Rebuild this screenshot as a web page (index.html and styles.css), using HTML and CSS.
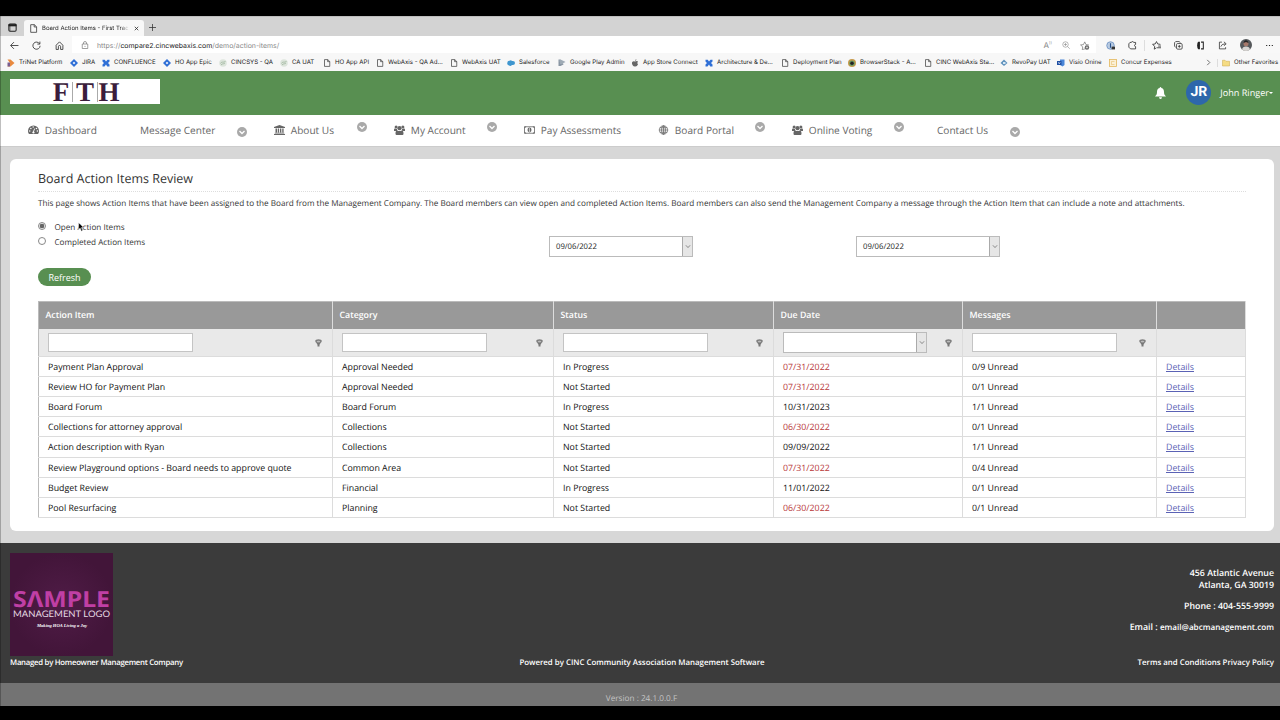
FILE: index.html
```html
<!DOCTYPE html>
<html lang="en">
<head>
    <meta charset="UTF-8">
    <meta name="viewport" content="width=device-width, initial-scale=1.0">
    <title>Board Action Items - First Trace Homes</title>
    <link rel="stylesheet" href="styles.css">
</head>
<body>
    <!-- Shared icon shapes -->
    <svg class="sprite" xmlns="http://www.w3.org/2000/svg">
        <symbol id="i-page" viewBox="0 0 16 16"><path d="M3 1.2h6.5L13.5 5v9.8H3zM9.2 1.2V5.3h4.3" fill="none" stroke="#444" stroke-width="1.5" stroke-linejoin="round"/></symbol>
        <symbol id="i-jira" viewBox="0 0 16 16"><path d="M8 0l8 8-8 8-8-8z" fill="#2f6fd6"/><path d="M8 5.4L10.6 8 8 10.6 5.4 8z" fill="#fff"/></symbol>
        <symbol id="i-conf" viewBox="0 0 16 16"><path d="M1 1.5h4.5L8 5l3-3.5h4L15 5l-3 3 3 3v4h-4.5L8 11l-3 3.8H1V11l3-3-3-3z" fill="#2f6fd6"/></symbol>
        <symbol id="i-leaf" viewBox="0 0 16 16"><circle cx="8" cy="8" r="7.5" fill="#dde5dc"/><path d="M3 9c2-5 5-1 10-4M4 12c3-4 6-1 8-4" fill="none" stroke="#9db49c" stroke-width="1.6"/></symbol>
        <symbol id="i-chev" viewBox="0 0 20 20"><circle cx="10" cy="10" r="10" fill="#a9a9a9"/><path d="M5 8l5 5 5-5" fill="none" stroke="#fff" stroke-width="2.6"/></symbol>
        <symbol id="i-users" viewBox="0 0 22 20"><circle cx="4.2" cy="4" r="3"/><circle cx="17.8" cy="4" r="3"/><circle cx="11" cy="6.3" r="4.2"/><path d="M0 12V9.5Q0 7 2 7.2q3 1.3 4 .6-.3 2.5 1 4.2zM22 12V9.5Q22 7 20 7.2q-3 1.3-4 .6.3 2.5-1 4.2zM3 17c0-4 1-6 4-6q4 2.2 8 0c3 0 4 2 4 6 0 2-1 3-3 3H6c-2 0-3-1-3-3z"/></symbol>
        <symbol id="i-filter" viewBox="0 0 14 16"><ellipse cx="7" cy="4" rx="6.5" ry="3.5" fill="#7d7d7d"/><ellipse cx="7" cy="4.4" rx="3.6" ry="1.1" fill="#d0d0d0"/><path d="M.8 5.5L5 11h4l4.2-5.5L7 8z" fill="#777"/><path d="M5 10h4v5H5z" fill="#777"/></symbol>
        <symbol id="i-down" viewBox="0 0 10 8"><path d="M1.5 2L5 5.8 8.5 2" fill="none" stroke="#777" stroke-width="1.4"/></symbol>
    </svg>

    <!-- Browser window -->
    <div class="tabs">
        <svg class="tab-menu" viewBox="0 0 16 16"><rect x="1.5" y="2" width="13" height="12.5" rx="2" fill="none" stroke="#222" stroke-width="1.8"/><path d="M1.5 2.5h13v3h-13zM3.5 5v9" stroke="#222" fill="#222"/></svg>
        <div class="tab">
            <svg class="tab-icon"><use href="#i-page"/></svg>
            <span class="tab-title">Board Action Items - First Trac</span>
            <svg class="tab-close" viewBox="0 0 10 10"><path d="M1.5 1.5l7 7M8.5 1.5l-7 7" stroke="#222" stroke-width="1.5"/></svg>
        </div>
        <svg class="tab-new" viewBox="0 0 10 10"><path d="M5 0v10M0 5h10" stroke="#333" stroke-width="1.1"/></svg>
    </div>

    <div class="toolbar">
        <div class="tools-left">
            <svg viewBox="0 0 16 16"><path d="M15 8H1.5M7 2L1 8l6 6" fill="none" stroke="#333" stroke-width="1.5"/></svg>
            <svg viewBox="0 0 16 16"><path d="M13.5 5A6.4 6.4 0 1 0 14.4 8.5M14 1v4.5H9.5" fill="none" stroke="#333" stroke-width="1.5"/></svg>
            <svg viewBox="0 0 16 16"><path d="M2 7.5L8 1.5l6 6V15h-4V10a2 2 0 0 0-4 0v5H2z" fill="none" stroke="#333" stroke-width="1.5"/></svg>
        </div>
        <div class="address">
            <svg viewBox="0 0 16 16"><path d="M2.5 6h11v9h-11zM5 6V4a3 3 0 0 1 6 0v2" fill="none" stroke="#777" stroke-width="1.4"/><circle cx="8" cy="10.5" r="1" fill="#777"/></svg>
            <span class="url">https://<b>compare2.cincwebaxis.com</b>/demo/action-items/</span>
            <span class="read-aloud">A<sup>))</sup></span>
            <svg class="zoom-in" viewBox="0 0 16 16"><circle cx="7" cy="7" r="5.5" fill="none" stroke="#888" stroke-width="1.2"/><path d="M11 11l4.5 4.5M4 7h6M7 4v6" stroke="#888" stroke-width="1.2"/></svg>
            <svg class="star-add" viewBox="0 0 18 16"><path d="M9 14l-5 1.5 1-5L1 7l5.2-.6L8.5 1.5l2.3 4.9L16 7" fill="none" stroke="#777" stroke-width="1.3"/><circle cx="12.5" cy="11.5" r="4" fill="#666"/><path d="M12.5 9.5v4M10.5 11.5h4" stroke="#fff"/></svg>
        </div>
        <div class="tools-right">
            <svg viewBox="0 0 16 16"><circle cx="8" cy="8" r="6.7" fill="#b9cbe2" stroke="#6e93c2" stroke-width="1.5"/><path d="M8 4v8" stroke="#28538f" stroke-width="2"/><path d="M10 10h6v5h-6z" fill="#333"/></svg>
            <svg viewBox="0 0 16 16"><path d="M6 2.5c0-2 4-2 4 0h3.5V6c-2.5 0-2.5 4 0 4v4H4.5L1.5 11V5l2-2.5z" fill="none" stroke="#333" stroke-width="1.5"/></svg>
            <i></i>
            <svg viewBox="0 0 16 16"><path d="M4 14.5l.8-5L1 6l4.7-.8L8 1l2 4.2 5 .8M11 9h5M9 12h7M4 14.5l4-2.5" fill="none" stroke="#333" stroke-width="1.5"/></svg>
            <svg viewBox="0 0 16 16"><rect x="4.5" y="4.5" width="10" height="10" rx="2" fill="none" stroke="#333" stroke-width="1.4"/><path d="M3 11.5L1 9V3l2-2h6l2.5 2M9.5 7v5M7 9.5h5" fill="none" stroke="#333" stroke-width="1.4"/></svg>
            <svg viewBox="0 0 16 16"><path d="M7 1.5H4Q2 3 2 8t2 6.5h3z" fill="#222"/><path d="M9 2h4v12H9" fill="none" stroke="#222" stroke-width="1.8"/></svg>
            <svg viewBox="0 0 16 16"><path d="M7 2H2.5v12h11v-3M5 10q1-5 8-5M10.5 1.5L14.5 5l-4 3.5" fill="none" stroke="#333" stroke-width="1.4"/></svg>
            <svg class="avatar" viewBox="0 0 24 24"><circle cx="12" cy="12" r="12" fill="#55585b"/><circle cx="12" cy="9.5" r="5" fill="#a6786a"/><path d="M7 8q1-6 5-5.5T17 8l-5-2z" fill="#222"/><path d="M4 21q1-6 8-6t8 6q-8 6-16 0z" fill="#d8d5d2"/></svg>
            <svg viewBox="0 0 16 16"><path d="M2 8h2M7 8h2M12 8h2" stroke="#222" stroke-width="2"/></svg>
        </div>
    </div>

    <div class="bookmarks">
        <div class="bookmark-list">
            <a><svg viewBox="0 0 16 16"><path d="M1 1h6l8 7-8 7H1l5-7z" fill="#e8893f"/><path d="M1 7h5v8H1z" fill="#7a5e8e"/></svg>TriNet Platform</a>
            <a><svg><use href="#i-jira"/></svg>JIRA</a>
            <a><svg><use href="#i-conf"/></svg>CONFLUENCE</a>
            <a><svg><use href="#i-jira"/></svg>HO App Epic</a>
            <a><svg><use href="#i-leaf"/></svg>CINCSYS - QA</a>
            <a><svg><use href="#i-leaf"/></svg>CA UAT</a>
            <a><svg><use href="#i-page"/></svg>HO App API</a>
            <a><svg><use href="#i-page"/></svg>WebAxis - QA Ad...</a>
            <a><svg><use href="#i-page"/></svg>WebAxis UAT</a>
            <a><svg viewBox="0 0 16 16"><path d="M4 13Q0 12 .5 8 1 3 5 3.5 8 1 10 4q6-1 6 4t-6 4q-3 3-6 1z" fill="#3f96cf"/></svg>Salesforce</a>
            <a><svg viewBox="0 0 16 16"><path d="M1 1h4l10 5-5 2 1 3-6 3H1z" fill="#8996a3"/><path d="M3 4h10M4 8h7" stroke="#dfe5ea"/></svg>Google Play Admin</a>
            <a><svg viewBox="0 0 16 16"><path d="M8 5q4-2 6 0-3 3 0 6-3 5-6 3.5Q5 16 3 12 0 6 5 4.5zM8 4q0-3 3-3.5Q11 3 8 4z" fill="#666"/></svg>App Store Connect</a>
            <a><svg><use href="#i-conf"/></svg>Architecture &amp; De...</a>
            <a><svg><use href="#i-page"/></svg>Deployment Plan</a>
            <a><svg viewBox="0 0 16 16"><circle cx="8" cy="8" r="8" fill="#c79a4b"/><circle cx="8" cy="8.5" r="5.5" fill="#6d9d63"/><circle cx="8" cy="8.5" r="3.5" fill="#222"/></svg>BrowserStack - A...</a>
            <a><svg><use href="#i-page"/></svg>CINC WebAxis Sta...</a>
            <a><svg viewBox="0 0 16 16"><path d="M8 1l7 7-7 6-7-6z" fill="#5f92bd"/><path d="M6 6h5v4H6z" fill="#d6e6f2"/></svg>RevoPay UAT</a>
            <a><svg viewBox="0 0 16 16"><path d="M6 1h9v11l-4 3-5-3z" fill="#4a86d8"/><path d="M0 4h9v8H0z" fill="#1f4fa3"/><path d="M2.5 6l2 4 2-4" stroke="#fff" fill="none"/></svg>Visio Onine</a>
            <a><svg viewBox="0 0 16 16"><rect x="1" y="1" width="14" height="14" fill="#fbf0d5" stroke="#e3b75d" stroke-width="1.6"/><path d="M11 5H5v6h6" fill="none" stroke="#e3b75d"/></svg>Concur Expenses</a>
        </div>
        <svg class="more" viewBox="0 0 10 16"><path d="M2 2l6 6-6 6" fill="none" stroke="#444" stroke-width="1.7"/></svg>
        <a class="other"><svg viewBox="0 0 16 16"><path d="M1 2.5h5l2 2h7V14H1z" fill="#f5dc83" stroke="#c9a748"/></svg>Other Favorites</a>
    </div>

    <!-- Site header -->
    <header class="header">
        <div class="logo">
            <span>F</span><span>T</span><span>H</span>
        </div>
        <div class="account">
            <svg class="bell" viewBox="0 0 22 24"><path d="M11 0q1.5 0 1.7 2C17 3 18 6.5 18 10c0 5 1.5 6 4 9H0c2.5-3 4-4 4-9 0-3.5 1-7 5.3-8Q9.5 0 11 0zM8 20.5h6Q14 24 11 24t-3-3.5z" fill="#fff"/></svg>
            <span class="initials">JR</span>
            <span class="user">John Ringer<i></i></span>
        </div>
    </header>

    <nav class="nav">
        <a><svg class="nav-icon" viewBox="0 0 22 20"><path d="M0 12a11 11 0 0 1 22 0q0 4-2 6H2q-2-2-2-6z"/><path d="M10 15l3.5-8" stroke="#fff" stroke-width="1.8"/><g fill="#fff"><circle cx="11" cy="15" r="2.2"/><circle cx="3.5" cy="12" r="1.5"/><circle cx="5.7" cy="6.8" r="1.5"/><circle cx="10.3" cy="4" r="1.4"/><circle cx="17" cy="7" r="1.5"/><circle cx="18.7" cy="12" r="1.5"/></g></svg>Dashboard</a>
        <a>Message Center<svg class="chev low"><use href="#i-chev"/></svg></a>
        <a><svg class="nav-icon" viewBox="0 0 22 20"><path d="M11 0l11 4v2H0V4zM3 7h3v8H3zM7.5 7h2.7v8H7.5zM12 7h2.7v8H12zM16.5 7h2.7v8h-2.7zM1.5 15.5h19V17h-19zM0 18h22v2H0z"/></svg>About Us<svg class="chev"><use href="#i-chev"/></svg></a>
        <a><svg class="nav-icon"><use href="#i-users"/></svg>My Account<svg class="chev"><use href="#i-chev"/></svg></a>
        <a><svg class="nav-icon" viewBox="0 0 22 20"><path d="M1 3.5h20v13H1z" fill="none" stroke="#666" stroke-width="1.6"/><path d="M1 3h4L1 7zM21 3v4l-4-4zM1 17v-4l4 4zM21 17h-4l4-4z"/><ellipse cx="11" cy="10" rx="4" ry="4.8"/><path d="M9.5 8l1.5-1v5.5M9.5 12.8h3" fill="none" stroke="#fff" stroke-width="1.2"/></svg>Pay Assessments</a>
        <a><svg class="nav-icon" viewBox="0 0 22 20"><g fill="none" stroke="#666" stroke-width="1.5"><circle cx="11" cy="10" r="8.5"/><ellipse cx="11" cy="10" rx="4" ry="8.5"/><path d="M11 1.5v17M2.5 10h17M4 5.5h14M4 14.5h14"/></g></svg>Board Portal<svg class="chev"><use href="#i-chev"/></svg></a>
        <a><svg class="nav-icon"><use href="#i-users"/></svg>Online Voting<svg class="chev"><use href="#i-chev"/></svg></a>
        <a>Contact Us<svg class="chev low"><use href="#i-chev"/></svg></a>
    </nav>

    <!-- Page content -->
    <main class="content">
        <section class="card">
            <h1>Board Action Items Review</h1>
            <p class="intro">This page shows Action Items that have been assigned to the Board from the Management Company. The Board members can view open and completed Action Items. Board members can also send the Management Company a message through the Action Item that can include a note and attachments.</p>

            <div class="options">
                <div class="radios">
                    <label><span class="radio checked"></span>Open Action Items
                        <svg class="cursor" viewBox="0 0 10 16"><path d="M1 1v11l2.6-2.3L5.5 15l2.2-1-2-5h3.8z" fill="#000" stroke="#fff" stroke-width=".8"/></svg>
                    </label>
                    <label><span class="radio"></span>Completed Action Items</label>
                </div>
                <div class="date"><span>09/06/2022</span><i><svg><use href="#i-down"/></svg></i></div>
                <div class="date"><span>09/06/2022</span><i><svg><use href="#i-down"/></svg></i></div>
            </div>

            <button class="btn">Refresh</button>

            <table class="grid">
                <colgroup><col class="c1"><col class="c2"><col class="c3"><col class="c4"><col class="c5"><col class="c6"></colgroup>
                <thead>
                    <tr><th>Action Item</th><th>Category</th><th>Status</th><th>Due Date</th><th>Messages</th><th></th></tr>
                    <tr class="filters">
                        <td><div><span class="box"></span><svg><use href="#i-filter"/></svg></div></td>
                        <td><div><span class="box"></span><svg><use href="#i-filter"/></svg></div></td>
                        <td><div><span class="box"></span><svg><use href="#i-filter"/></svg></div></td>
                        <td><div><span class="date"><span></span><i><svg><use href="#i-down"/></svg></i></span><svg><use href="#i-filter"/></svg></div></td>
                        <td><div><span class="box"></span><svg><use href="#i-filter"/></svg></div></td>
                        <td></td>
                    </tr>
                </thead>
                <tbody>
                    <tr><td>Payment Plan Approval</td><td>Approval Needed</td><td>In Progress</td><td class="late">07/31/2022</td><td>0/9 Unread</td><td><a>Details</a></td></tr>
                    <tr><td>Review HO for Payment Plan</td><td>Approval Needed</td><td>Not Started</td><td class="late">07/31/2022</td><td>0/1 Unread</td><td><a>Details</a></td></tr>
                    <tr><td>Board Forum</td><td>Board Forum</td><td>In Progress</td><td>10/31/2023</td><td>1/1 Unread</td><td><a>Details</a></td></tr>
                    <tr><td>Collections for attorney approval</td><td>Collections</td><td>Not Started</td><td class="late">06/30/2022</td><td>0/1 Unread</td><td><a>Details</a></td></tr>
                    <tr class="tall"><td>Action description with Ryan</td><td>Collections</td><td>Not Started</td><td>09/09/2022</td><td>1/1 Unread</td><td><a>Details</a></td></tr>
                    <tr><td>Review Playground options - Board needs to approve quote</td><td>Common Area</td><td>Not Started</td><td class="late">07/31/2022</td><td>0/4 Unread</td><td><a>Details</a></td></tr>
                    <tr><td>Budget Review</td><td>Financial</td><td>In Progress</td><td>11/01/2022</td><td>0/1 Unread</td><td><a>Details</a></td></tr>
                    <tr><td>Pool Resurfacing</td><td>Planning</td><td>Not Started</td><td class="late">06/30/2022</td><td>0/1 Unread</td><td><a>Details</a></td></tr>
                </tbody>
            </table>
        </section>
    </main>

    <footer class="footer">
        <div class="footer-top">
            <svg class="sample-logo" viewBox="0 0 103 103">
                <defs><radialGradient id="plum"><stop offset="0" stop-color="#501c47"/><stop offset="1" stop-color="#421539"/></radialGradient></defs>
                <rect width="103" height="103" fill="url(#plum)"/>
                <text class="l1" x="3" y="54" textLength="97" lengthAdjust="spacingAndGlyphs">SΛMPLE</text>
                <text class="l2" x="3" y="63.8" textLength="97" lengthAdjust="spacingAndGlyphs">MANAGEMENT LOGO</text>
                <text class="l3" x="27" y="74" textLength="50" lengthAdjust="spacingAndGlyphs">Making HOA Living a Joy</text>
            </svg>
            <address>
                <p>456 Atlantic Avenue<br>Atlanta, GA 30019</p>
                <p>Phone : 404-555-9999</p>
                <p>Email : <span>email@abcmanagement.com</span></p>
            </address>
        </div>
        <div class="footer-links">
            <span class="managed">Managed by Homeowner Management Company</span>
            <span>Powered by CINC Community Association Management Software</span>
            <span>Terms and Conditions Privacy Policy</span>
        </div>
    </footer>
    <div class="version">Version : 24.1.0.0.F</div>
</body>
</html>
```
FILE: styles.css
```css
:root {
    --green: #588f51;
    --gray: #999;
    --line: #dcdcdc;
    --text: #333;
}

* {
    margin: 0;
    padding: 0;
    box-sizing: border-box;
}

body {
    position: relative;
    width: 1280px;
    height: 720px;
    overflow: hidden;
    padding: 16px 0 14px;
    background: #000;
    font-family: 'Open Sans', 'Liberation Sans', sans-serif;
    font-size: 9px;
    color: var(--text);
    text-rendering: geometricPrecision;
    display: flex;
    flex-direction: column;
}

/* window edge */
body::after {
    content: '';
    position: absolute;
    left: 0;
    top: 16px;
    bottom: 14px;
    width: 1px;
    background: rgba(0, 0, 0, 0.25);
}

svg {
    display: block;
    flex: none;
}

.sprite {
    position: absolute;
    width: 0;
    height: 0;
}

/* browser chrome */
.tabs,
.toolbar,
.bookmarks {
    font-family: Inter, 'Liberation Sans', sans-serif;
    display: flex;
    align-items: center;
}

.tabs {
    height: 20px;
    padding: 1px 0 0 8px;
    background: #d3d3d3;
    border-top: 1px solid #bdbdbd;
}

.tab-menu {
    width: 9px;
    height: 9px;
}

.tab {
    display: flex;
    align-items: center;
    width: 120px;
    height: 16px;
    margin: 2px 0 0 7px;
    padding: 0 6px 0 5px;
    background: #f8f8f8;
    border-radius: 3px 3px 0 0;
}

.tab-icon {
    width: 9px;
    height: 9px;
}

.tab-title {
    width: 87px;
    margin: 0 5px 0 4px;
    font-size: 6px;
    color: #222;
    white-space: nowrap;
    -webkit-mask-image: linear-gradient(90deg, #000 90%, transparent);
}

.tab-close {
    width: 5px;
    height: 5px;
}

.tab-new {
    width: 7px;
    height: 7px;
    margin-left: 5px;
}

.toolbar {
    height: 17px;
    background: #f8f8f8;
}

.tools-left {
    display: flex;
    gap: 13.5px;
    padding: 1px 0 0 9.5px;
    width: 72px;
}

.tools-left svg,
.tools-right svg {
    width: 9px;
    height: 9px;
}

.address {
    display: flex;
    align-items: center;
    width: 1024px;
    height: 17px;
    padding: 1px 6px 0 9px;
    background: #fff;
    color: #888;
}

.address svg {
    width: 8px;
    height: 8px;
}

.url {
    margin: 0 auto 0 8px;
    font-size: 6.95px;
}

.url b {
    font-weight: 400;
    color: #222;
}

.read-aloud {
    font-size: 8px;
}

.read-aloud sup {
    font-size: 4px;
}

.address .zoom-in {
    margin: 0 10px;
}

.address .star-add {
    width: 10px;
    height: 9px;
}

.tools-right {
    display: flex;
    align-items: center;
    flex: 1;
    justify-content: space-between;
    padding: 1px 6px 0 10px;
}

.tools-right i {
    width: 1px;
    height: 11px;
    margin: 0 -6px;
    background: #ddd;
}

.tools-right .avatar {
    width: 12px;
    height: 12px;
}

.bookmarks {
    height: 18px;
    padding: 1px 0 0 7px;
    background: #f7f7f7;
    font-size: 6.1px;
    color: #222;
}

.bookmark-list {
    display: grid;
    grid-template-columns: 63px 32px 61px 56px 61px 43px 53px 74px 57px 51px 73px 74px 76px 67px 76px 76px 57px 52px 94px;
}

.bookmarks a {
    display: flex;
    align-items: center;
    gap: 4px;
    white-space: nowrap;
}

.bookmarks a svg {
    width: 8px;
    height: 8px;
}

.bookmarks .more {
    width: 5px;
    height: 7px;
    margin-left: 3px;
}

.bookmarks .other {
    margin-left: 6px;
    padding-left: 4px;
    border-left: 1px solid #ddd;
}

/* green header */
.header {
    display: flex;
    justify-content: space-between;
    height: 43.5px;
    padding: 8px 7px 0 10px;
    background: var(--green);
}

.logo {
    display: flex;
    justify-content: center;
    align-items: center;
    width: 150px;
    height: 25px;
    background: #fff;
    font: 700 27px/20px 'Liberation Serif', serif;
    color: #3b1d3c;
}

.logo span {
    display: flex;
    justify-content: center;
    width: 22px;
    height: 20px;
}

.logo span:nth-child(2) {
    width: 26px;
    border: 1px solid #aaa;
    border-width: 0 1px;
}

.account {
    display: flex;
    align-items: center;
    height: 27px;
    color: #fff;
}

.bell {
    width: 11px;
    height: 12px;
}

.initials {
    width: 25px;
    height: 25px;
    margin: 0 9px 0 20px;
    border-radius: 50%;
    background: #2d67ab;
    font: 700 14px/25px Roboto, sans-serif;
    text-align: center;
}

.user {
    display: flex;
    align-items: center;
    font-size: 9.1px;
}

.user i {
    border: 2.5px solid transparent;
    border-top-color: #fff;
    border-bottom: 0;
}

/* main menu */
.nav {
    display: grid;
    grid-template-columns: 112px 134px 120px 130px 134px 134px 139px 116px;
    height: 32px;
    padding-left: 28px;
    background: #fff;
    border-bottom: 1px solid #ccc;
}

.nav a {
    display: flex;
    align-items: center;
    padding: 0 27px 0 0;
    font-size: 10.1px;
    color: #666;
    white-space: nowrap;
}

.nav a:last-child {
    padding-left: 6px;
}

.nav-icon {
    width: 11px;
    height: 10px;
    margin-right: 5.8px;
    fill: #666;
}

.chev {
    width: 10px;
    height: 10px;
    margin: 0 0 6px auto;
}

.chev.low {
    margin: 3px 0 0 auto;
}

/* content card */
.content {
    height: 396.5px;
    padding: 12.5px 6px 12px 10px;
    background: #d7d7d7;
}

.card {
    height: 372px;
    padding: 11px 28px 0;
    background: #fff;
    border-radius: 6px;
}

h1 {
    height: 22px;
    font-size: 12.5px;
    line-height: 18px;
    font-weight: 400;
    border-bottom: 1px dotted #ddd;
}

.intro {
    margin-top: 4px;
    font-size: 8.165px;
    line-height: 15px;
    white-space: nowrap;
}

.options {
    display: flex;
    margin-top: 8px;
    height: 40px;
}

.radios {
    width: 511px;
}

.radios label {
    position: relative;
    display: flex;
    align-items: center;
    height: 15px;
    padding-top: 1px;
    font-size: 8.15px;
}

.radio {
    width: 8px;
    height: 8px;
    margin: 0 8.5px 2px 0;
    border: 1px solid #888;
    border-radius: 50%;
}

.radio.checked {
    background: radial-gradient(#666 0 2px, #eee 2.6px);
}

.cursor {
    position: absolute;
    left: 40px;
    top: 3px;
    width: 6px;
    height: 10px;
}

.date {
    display: flex;
    justify-content: space-between;
    width: 144px;
    height: 21px;
    border: 1px solid #bbb;
    background: #fff;
    font-size: 7.7px;
    line-height: 20px;
    color: #222;
}

.options .date {
    margin: 17px 163px 0 0;
}

.options .date span {
    padding-left: 6px;
}

.date i {
    display: flex;
    align-items: center;
    justify-content: center;
    width: 10px;
    background: #e6e6e6;
    border-left: 1px solid #aaa;
}

.date i svg {
    width: 6px;
    height: 5px;
}

.btn {
    display: block;
    width: 53px;
    height: 18px;
    margin-top: 9px;
    border: none;
    border-radius: 9px;
    background: var(--green);
    color: #fff;
    font: 9px/17px 'Open Sans', sans-serif;
}

/* action items table */
.grid {
    width: 1208px;
    margin-top: 15px;
    table-layout: fixed;
    border-collapse: collapse;
    border: 1px solid #bbb;
    color: #111;
    font-size: 8.8px;
}

.c1 { width: 294px; }
.c2 { width: 221px; }
.c3 { width: 220px; }
.c4 { width: 189px; }
.c5 { width: 194px; }
.c6 { width: 89px; }

.grid th {
    height: 27px;
    padding: 0 0 0 6.5px;
    text-align: left;
    font-weight: 600;
    color: #fff;
    background: var(--gray);
    border-right: 1px solid #ddd;
}

.grid td {
    height: 20px;
    padding-left: 9px;
    line-height: 12px;
    border-right: 1px solid var(--line);
    border-bottom: 1px solid var(--line);
}

.grid .tall td {
    height: 21px;
}

.grid .filters td {
    height: 28px;
    background: #e9e9e9;
}

.filters div {
    display: flex;
    justify-content: space-between;
    align-items: center;
    padding-right: 10px;
}

.filters div > svg {
    width: 7px;
    height: 8px;
    margin-top: 2px;
}

.box {
    width: 145px;
    height: 19px;
    background: #fff;
    border: 1px solid #c4c4c4;
}

.grid .late {
    color: #b8383a;
}

.grid a {
    color: #5b62b5;
    text-decoration: underline;
}

/* footer */
.footer {
    height: 140px;
    padding: 10px 6px 0 10px;
    background: #3b3b3b;
    color: #fff;
}

.footer-top {
    display: flex;
    justify-content: space-between;
    height: 103px;
}

.sample-logo {
    width: 103px;
    height: 103px;
}

.l1 {
    font: 700 22px 'Noto Sans', sans-serif;
    fill: #c03fa5;
}

.l2 {
    font: 9px Lato, sans-serif;
    fill: #e6dbe4;
}

.l3 {
    font: italic 700 4.5px 'Liberation Serif', serif;
    fill: #fff;
}

address {
    padding-top: 13.5px;
    font-style: normal;
    font-weight: 600;
    font-size: 8.8px;
    line-height: 12.5px;
    text-align: right;
}

address p {
    margin-bottom: 8.3px;
}

address p span {
    font-size: 8.15px;
}

.footer-links {
    display: grid;
    grid-template-columns: 1fr auto 1fr;
    margin-top: 2px;
    font-size: 7.87px;
    font-weight: 600;
    line-height: 11px;
}

.footer-links .managed {
    font-size: 7.75px;
    letter-spacing: -0.26px;
}

.footer-links span:last-child {
    text-align: right;
}

.version {
    height: 23px;
    padding-left: 3px;
    background: #737373;
    color: #c4c4c4;
    font-size: 8.2px;
    line-height: 31px;
    text-align: center;
}
```
